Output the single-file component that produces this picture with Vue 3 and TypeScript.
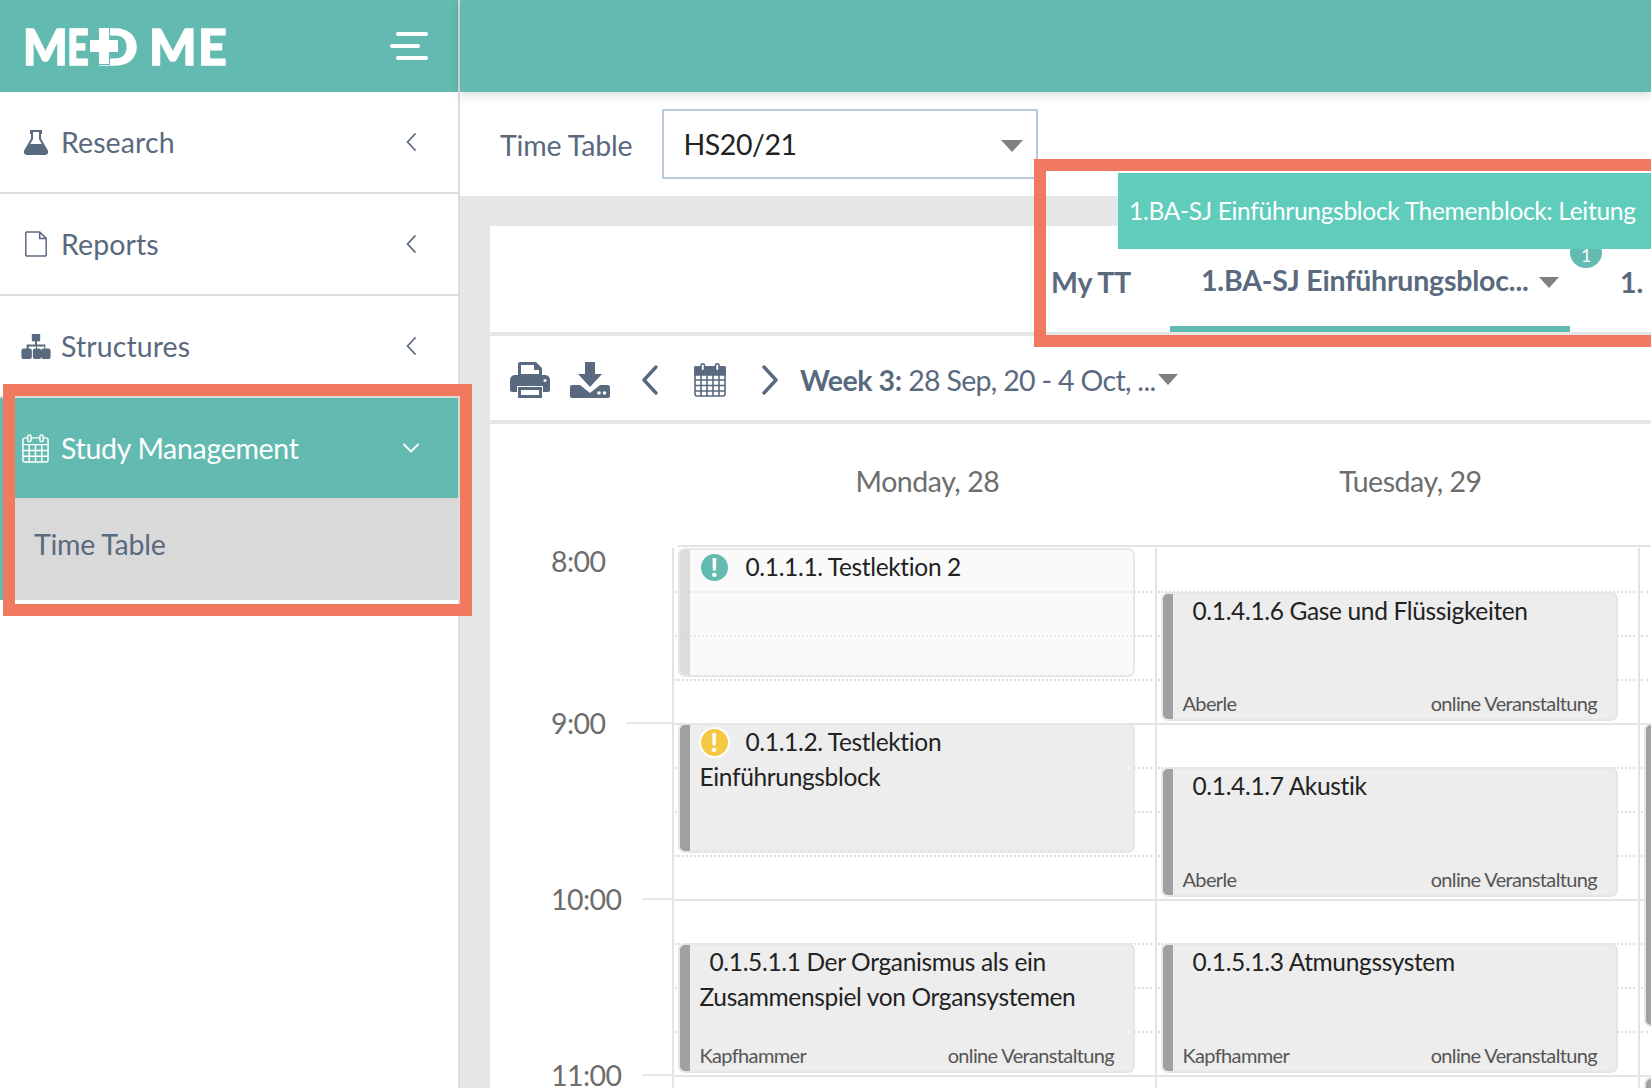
<script setup lang="ts">
interface NavItem { label: string; icon: string }
interface CalEvent {
  top: number; height: number; lines: string[]; indent: number;
  status?: string; faded?: boolean; left?: string; right?: string;
}
const nav: NavItem[] = [
  { label: 'Research', icon: 'flask' },
  { label: 'Reports', icon: 'file' },
  { label: 'Structures', icon: 'tree' },
]
const hours = [
  { label: '8:00', top: 16, tick: 0 },
  { label: '9:00', top: 178, tick: 46 },
  { label: '10:00', top: 354, tick: 30 },
  { label: '11:00', top: 530, tick: 30 },
]
const days: { name: string; events: CalEvent[] }[] = [
  {
    name: 'Monday, 28',
    events: [
      { top: 3, height: 129, lines: ['0.1.1.1. Testlektion 2'], indent: 46, status: 'teal', faded: true },
      { top: 178, height: 130, lines: ['0.1.1.2. Testlektion', 'Einführungsblock'], indent: 46, status: 'yellow' },
      { top: 398, height: 130, lines: ['0.1.5.1.1 Der Organismus als ein', 'Zusammenspiel von Organsystemen'], indent: 10, left: 'Kapfhammer', right: 'online Veranstaltung' },
    ],
  },
  {
    name: 'Tuesday, 29',
    events: [
      { top: 47, height: 129, lines: ['0.1.4.1.6 Gase und Flüssigkeiten'], indent: 10, left: 'Aberle', right: 'online Veranstaltung' },
      { top: 222, height: 130, lines: ['0.1.4.1.7 Akustik'], indent: 10, left: 'Aberle', right: 'online Veranstaltung' },
      { top: 398, height: 130, lines: ['0.1.5.1.3 Atmungssystem'], indent: 10, left: 'Kapfhammer', right: 'online Veranstaltung' },
    ],
  },
  {
    name: '',
    events: [
      { top: 178, height: 304, lines: [], indent: 0 },
      { top: 532, height: 60, lines: [], indent: 0 },
    ],
  },
]
const slots = Array.from({ length: 13 }, (_, i) => i)
</script>

<template>
  <div class="page">
    <aside class="sidebar">
      <div class="brand">
        <div class="logo">
          <span class="logo-m">M</span>
          <span class="logo-e">E</span>
          <svg class="logo-plus" viewBox="-1 -1 30 38"><path d="M9 0h10v12h9v12h-9v12H9V24H0V12h9z" fill="#fff" stroke="#62bab0" stroke-width="2" paint-order="stroke" /></svg>
          <span class="logo-d">D</span>
          <span class="logo-m second">M</span>
          <span class="logo-e2">E</span>
        </div>
        <svg class="burger" viewBox="0 0 38 28" fill="none" stroke="#fff" stroke-width="4" stroke-linecap="round">
          <path d="M8 2h28M2 14h26M8 26h28" />
        </svg>
      </div>
      <div v-for="item in nav" :key="item.label" class="nav-item">
        <svg v-if="item.icon === 'flask'" class="nav-icon" viewBox="0 0 24 24">
          <path d="M7 1h10v2h-1v6l7 12c.7 1.400-.2 3-1.800 3H2.800C1.200 24 .3 22.400 1 21l7-12V3H7z" fill="none" stroke="#5a6a7e" stroke-width="2" />
          <path d="M5.500 14h13L23 22c.3 1-.3 2-1.500 2h-19C1.300 24 .7 23 1 22z" fill="#5a6a7e" />
        </svg>
        <svg v-else-if="item.icon === 'file'" class="nav-icon" viewBox="0 0 24 28">
          <path d="M2 1h14l7 7v18a1 1 0 0 1-1 1H2a1 1 0 0 1-1-1V2a1 1 0 0 1 1-1zM16 1v7h7" fill="none" stroke="#5a6a7e" stroke-width="1.600" />
        </svg>
        <svg v-else class="nav-icon wide" viewBox="0 0 28 24">
          <path d="M10 0h8v7h-3v3h8v4h3a2 2 0 0 1 2 2v6a2 2 0 0 1-2 2h-5a2 2 0 0 1-2-2v-6a2 2 0 0 1 2-2h1v-2h-7v2h2a2 2 0 0 1 2 2v6a2 2 0 0 1-2 2h-4a2 2 0 0 1-2-2v-6a2 2 0 0 1 2-2h1v-2H7v2h1a2 2 0 0 1 2 2v6a2 2 0 0 1-2 2H2a2 2 0 0 1-2-2v-6a2 2 0 0 1 2-2h3v-4h8V7h-3z" fill="#5a6a7e" />
        </svg>
        <span class="nav-label">{{ item.label }}</span>
        <svg class="nav-chevron" viewBox="0 0 10 18" fill="none" stroke="#5a6a7e" stroke-width="1.800" stroke-linecap="round" stroke-linejoin="round"><path d="M9 1 1.500 9 9 17" /></svg>
      </div>
      <div class="nav-group">
        <div class="nav-item active">
          <svg class="nav-icon cal-w" viewBox="0 0 28 30" fill="none" stroke="#fff" stroke-width="1.500">
            <rect x="1" y="4" width="26" height="25" rx="2" />
            <path d="M1 11h26M1 17h26M1 23h26M7.500 11v18M14 11v18M20.500 11v18" />
            <rect x="6" y="1" width="3.500" height="7" rx="1.700" fill="#62bab0" />
            <rect x="18.500" y="1" width="3.500" height="7" rx="1.700" fill="#62bab0" />
          </svg>
          <span class="nav-label">Study Management</span>
          <svg class="nav-down" viewBox="0 0 16 10" fill="none" stroke="#fff" stroke-width="1.800" stroke-linecap="round" stroke-linejoin="round"><path d="M1 1.500 8 8.500 15 1.500" /></svg>
        </div>
        <div class="nav-sub">Time Table</div>
      </div>
    </aside>

    <main class="main">
      <div class="topbar"></div>
      <div class="filter">
        <span class="filter-label">Time Table</span>
        <div class="select">
          <span>HS20/21</span>
          <i class="caret"></i>
        </div>
      </div>
      <div class="content">
        <div class="tabs">
          <span class="tab plain">My TT</span>
          <div class="tab current">
            <span>1.BA-SJ Einführungsbloc...</span>
            <i class="caret small"></i>
            <b class="badge">1</b>
          </div>
          <span class="tab clipped">1.</span>
          <div class="tooltip">1.BA-SJ Einführungsblock Themenblock: Leitung</div>
        </div>
        <div class="toolbar">
          <svg class="tool" viewBox="0 0 40 36" fill="#5a6a7e">
            <path d="M10 0h16l6 6v8H8V2a2 2 0 0 1 2-2zM11 3v9h18V8h-5V3z" fill-rule="evenodd" />
            <path d="M5 13h30a5 5 0 0 1 5 5v10a2 2 0 0 1-2 2h-5v-6H7v6H2a2 2 0 0 1-2-2V18a5 5 0 0 1 5-5z" />
            <path d="M8 25h24v11H8zM11 28v5h18v-5z" fill-rule="evenodd" />
            <circle cx="35" cy="18.500" r="1.500" fill="#fff" />
          </svg>
          <svg class="tool dl" viewBox="0 0 40 36" fill="#5a6a7e">
            <path d="M15 0h10v12h7L20 25 8 12h7z" />
            <path d="M2 23h8l10 8 10-8h8a2 2 0 0 1 2 2v9a2 2 0 0 1-2 2H2a2 2 0 0 1-2-2v-9a2 2 0 0 1 2-2z" />
            <circle cx="29" cy="31" r="1.800" fill="#fff" /><circle cx="34.500" cy="31" r="1.800" fill="#fff" />
          </svg>
          <svg class="step prev" viewBox="0 0 16 30" fill="none" stroke="#5a6a7e" stroke-width="3.400" stroke-linecap="round" stroke-linejoin="round"><path d="M14 2 2 15l12 13" /></svg>
          <svg class="tool-cal" viewBox="0 0 32 34" fill="none" stroke="#5a6a7e" stroke-width="1.600">
            <rect x="1" y="4" width="30" height="29" rx="2" />
            <path d="M1 4h30v8H1z" fill="#5a6a7e" />
            <path d="M1 17h30M1 22.500h30M1 28h30M7 12v21M13 12v21M19 12v21M25 12v21" />
            <rect x="7" y="0.800" width="3.500" height="7" rx="1.700" fill="#fff" />
            <rect x="21.500" y="0.800" width="3.500" height="7" rx="1.700" fill="#fff" />
          </svg>
          <svg class="step next" viewBox="0 0 16 30" fill="none" stroke="#5a6a7e" stroke-width="3.400" stroke-linecap="round" stroke-linejoin="round"><path d="M2 2l12 13L2 28" /></svg>
          <span class="week"><b>Week 3:</b> 28 Sep, 20 - 4 Oct, ...</span>
          <i class="caret small week-caret"></i>
        </div>
        <div class="calendar">
          <div class="day-heads">
            <span v-for="d in days" :key="d.name" class="day-head">{{ d.name }}</span>
          </div>
          <div class="grid">
            <div class="gutter">
              <div v-for="h in hours" :key="h.label" class="hour" :style="{ top: h.top + 'px' }">
                <span class="hour-label">{{ h.label }}</span>
                <i v-if="h.tick" class="hour-tick" :style="{ width: h.tick + 'px' }"></i>
              </div>
            </div>
            <div v-for="d in days" :key="'col' + d.name" class="col">
              <div v-for="s in slots" :key="s" class="slot" :class="{ solid: s % 4 === 0 }"></div>
              <div
                v-for="e in d.events"
                :key="e.top"
                class="event"
                :class="{ faded: e.faded }"
                :style="{ top: e.top + 'px', height: e.height + 'px' }"
              >
                <div class="event-title">
                  <div v-for="(l, i) in e.lines" :key="l" :style="i === 0 ? { paddingLeft: e.indent + 'px' } : undefined">{{ l }}</div>
                  <span v-if="e.status" class="status" :class="e.status">!</span>
                </div>
                <div v-if="e.left" class="event-foot">
                  <span>{{ e.left }}</span><span>{{ e.right }}</span>
                </div>
              </div>
            </div>
          </div>
        </div>
      </div>
    </main>

    <div class="mark mark-nav"></div>
    <div class="mark mark-tabs"></div>
  </div>
</template>

<style>
html, body { margin: 0; background: #fff; overflow: hidden; }
</style>

<style scoped>
.page {
  position: relative;
  display: flex;
  width: 1651px;
  height: 1088px;
  overflow: hidden;
  font-family: Lato, "Open Sans", sans-serif;
  color: #5a6a7e;
  background: #fff;
}
.sidebar {
  flex: none;
  width: 458px;
  border-right: 2px solid #dcdcdc;
  background: #fff;
}
.brand {
  display: flex;
  align-items: center;
  justify-content: space-between;
  height: 92px;
  padding: 0 30px 0 26px;
  background: #62bab0;
  box-sizing: border-box;
}
.logo {
  display: flex;
  align-items: center;
  height: 36px;
  margin-left: -3px;
  color: #fff;
  font-size: 50px;
  font-weight: 900;
  line-height: 36px;
  -webkit-text-stroke: 1.500px #fff;
}
.logo span { display: block; flex: none; }
.logo-m { width: 44px; transform: scaleX(0.94); transform-origin: left center; }
.logo-m.second { width: 49px; transform: none; }
.logo-e { width: 22px; transform: scaleX(0.75); transform-origin: left center; }
.logo-plus { width: 30px; height: 38px; flex: none; margin: 0 -1px 0 0; position: relative; z-index: 1; }
.logo-d { width: 53px; margin-left: -22px; transform: scaleX(1.1); transform-origin: left center; }
.logo-e2 { width: 30px; }
.burger { width: 38px; height: 28px; }
.nav-item {
  display: flex;
  align-items: center;
  height: 102px;
  padding: 0 42px 0 24px;
  box-sizing: border-box;
  border-bottom: 2px solid #dcdcdc;
  font-size: 28.500px;
}
.nav-icon { width: 24px; height: 26px; flex: none; }
.nav-icon.wide { width: 30px; height: 25px; margin-left: -3px; margin-right: -3px; }
.nav-label { margin-left: 13px; flex: 1; letter-spacing: 0.1px; }
.nav-chevron { width: 10px; height: 18px; flex: none; }
.nav-group { border-left: 3px solid #62bab0; }
.nav-item.active {
  height: 100px;
  border-bottom: 0;
  background: #62bab0;
  color: #fff;
  padding: 0 39px 0 19px;
}
.active .nav-label { margin-left: 12px; letter-spacing: -0.3px; }
.cal-w { width: 27px; height: 29px; }
.nav-down { width: 16px; height: 10px; flex: none; }
.nav-sub {
  display: flex;
  align-items: center;
  height: 102px;
  padding-left: 31px;
  padding-bottom: 11px;
  box-sizing: border-box;
  background: #d9d9d9;
  font-size: 28.500px;
  letter-spacing: -0.25px;
}
.main {
  flex: 1;
  display: flex;
  flex-direction: column;
  min-width: 0;
  background: #e6e6e6;
}
.topbar {
  flex: none;
  height: 92px;
  background: #62bab0;
  box-shadow: 0 3px 10px rgba(0, 0, 0, 0.15);
  position: relative;
  z-index: 1;
}
.filter {
  display: flex;
  align-items: center;
  gap: 29px;
  height: 104px;
  padding: 0 0 0 40px;
  box-sizing: border-box;
  background: #fff;
  font-size: 28.500px;
  flex: none;
  letter-spacing: -0.15px;
}
.filter-label { padding-top: 2px; }
.select {
  display: flex;
  align-items: center;
  justify-content: space-between;
  width: 376px;
  height: 70px;
  padding: 0 13px 0 20px;
  box-sizing: border-box;
  border: 2px solid #b9c9d9;
  color: #222;
  font-size: 28.500px;
  letter-spacing: -0.45px;
}
.caret {
  display: block;
  width: 0;
  height: 0;
  border-left: 11px solid transparent;
  border-right: 11px solid transparent;
  border-top: 12px solid #808080;
  margin-top: 4px;
}
.content { flex: 1; padding: 30px 0 0 30px; min-height: 0; }
.tabs {
  position: relative;
  display: flex;
  align-items: center;
  height: 106px;
  padding-left: 561px;
  background: #fff;
  font-size: 28.500px;
  font-weight: 700;
  white-space: nowrap;
}
.tab { display: flex; align-items: center; height: 100%; box-sizing: border-box; padding-top: 5px; }
.plain { width: 119px; letter-spacing: -0.25px; }
.current {
  position: relative;
  width: 400px;
  padding-left: 31px;
  padding-top: 8px;
  border-bottom: 6px solid #62bab0;
  letter-spacing: -0.2px;
}
.current .caret { margin-left: 10px; }
.badge {
  position: absolute;
  right: -32px;
  top: 11px;
  width: 32px;
  height: 31px;
  border-radius: 50%;
  background: #62bab0;
  color: #fff;
  font-size: 18px;
  font-weight: 400;
  text-align: center;
  line-height: 36px;
}
.clipped { padding-left: 50px; }
.tooltip {
  position: absolute;
  left: 628px;
  top: -53px;
  width: 533px;
  height: 76px;
  padding-left: 11px;
  box-sizing: border-box;
  background: #5fccbc;
  color: #fff;
  font-size: 24.500px;
  font-weight: 400;
  line-height: 76px;
  letter-spacing: -0.3px;
  z-index: 2;
}
.toolbar {
  display: flex;
  align-items: center;
  height: 84px;
  margin-top: 4px;
  padding: 3px 0 0 20px;
  box-sizing: border-box;
  background: #fff;
  white-space: nowrap;
}
.tool { width: 40px; height: 36px; flex: none; }
.tool.dl { margin-left: 20px; }
.step { width: 16px; height: 30px; flex: none; }
.prev { margin-left: 32px; }
.tool-cal { width: 32px; height: 34px; flex: none; margin-left: 36px; }
.next { margin-left: 36px; }
.week { margin-left: 22px; font-size: 28.500px; letter-spacing: -0.68px; }
.week b { font-weight: 700; letter-spacing: -0.45px; }
.week-caret { margin: 0 0 0 2px; }
.caret.small { border-left-width: 10.500px; border-right-width: 10.500px; border-top-width: 11.500px; }
.calendar { margin-top: 4px; background: #fff; height: 664px; overflow: hidden; }
.day-heads {
  display: grid;
  grid-template-columns: 182px 483px 483px 1fr;
  height: 121px;
  box-sizing: border-box;
}
.day-head {
  text-align: center;
  font-size: 28.500px;
  color: #6d6d6d;
  padding: 40px 0 0 28px;
  letter-spacing: -0.45px;
}
.day-head:first-child { grid-column: 2; }
.grid {
  display: grid;
  grid-template-columns: 182px 483px 483px 1fr;
  height: 560px;
}
.gutter { position: relative; }
.hour {
  position: absolute;
  left: 0;
  right: 0;
  height: 0;
  display: flex;
  align-items: center;
  justify-content: flex-end;
}
.hour-label {
  position: absolute;
  left: 61px;
  font-size: 28.500px;
  color: #6d6d6d;
  letter-spacing: -0.55px;
}
.hour-tick { display: block; height: 2px; background: #e6e6e6; }
.col {
  position: relative;
  border-left: 2px solid transparent;
  box-sizing: border-box;
}
.col::before {
  content: "";
  position: absolute;
  left: -2px;
  top: 3px;
  bottom: 0;
  width: 2px;
  background: #e4e4e4;
}
.slot {
  height: 44px;
  box-sizing: border-box;
  border-top: 2px dotted #dedede;
  margin: 0 3px 0 1px;
}
.slot.solid { border-top: 2px solid #e4e4e4; margin: 0 0 0 -2px; }
.slot:first-child { height: 46px; }
.col:nth-child(2) .slot:first-child { margin-left: 4px; }
.event {
  position: absolute;
  left: 4px;
  width: 457px;
  box-sizing: border-box;
  display: flex;
  flex-direction: column;
  justify-content: space-between;
  padding: 0 19px 3px 19.500px;
  border: 2px solid #e6e6e6;
  border-radius: 7px;
  background: #ededed;
  color: #222;
}
.event::before {
  content: "";
  position: absolute;
  left: 0;
  top: 0;
  bottom: 0;
  width: 10px;
  border-radius: 5px 0 0 5px;
  background: #a0a0a0;
}
.event.faded { background: rgba(245, 245, 245, 0.5); }
.event.faded::before { background: rgba(200, 200, 200, 0.6); }
.event-title {
  position: relative;
  margin-top: -1px;
  font-size: 24.500px;
  line-height: 35px;
  letter-spacing: -0.35px;
}
.status {
  position: absolute;
  left: -1px;
  top: 3px;
  width: 31px;
  height: 31px;
  border: 2px solid #fff;
  border-radius: 50%;
  box-sizing: border-box;
  color: #fff;
  font-size: 26px;
  font-weight: 900;
  line-height: 27px;
  text-align: center;
}
.status.teal { background: #62bab0; border-color: #fafafa; }
.status.yellow { background: #f5c842; }
.event-foot {
  display: flex;
  justify-content: space-between;
  font-size: 20px;
  line-height: 26px;
  color: #555;
  letter-spacing: -0.65px;
}
.mark {
  position: absolute;
  box-sizing: border-box;
  border: 12px solid #f0795f;
  pointer-events: none;
  z-index: 5;
}
.mark-nav { left: 3px; top: 384px; width: 469px; height: 232px; }
.mark-tabs { left: 1034px; top: 159px; width: 640px; height: 188px; }
</style>
